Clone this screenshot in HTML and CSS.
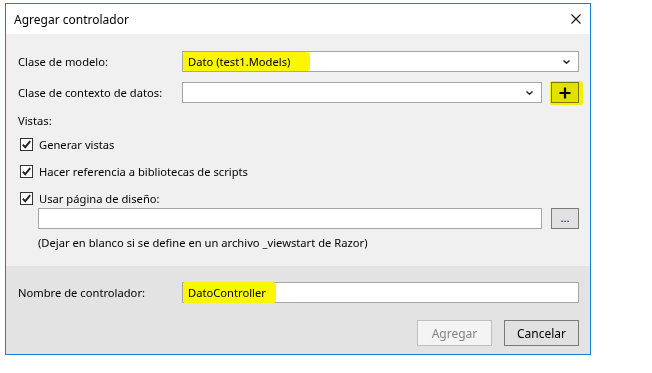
FILE: index.html
```html
<!DOCTYPE html>
<html lang="es">
<head>
<meta charset="utf-8">
<title>Agregar controlador</title>
<link rel="stylesheet" href="styles.css">
</head>
<body>
<div class="dialog">
  <div class="titlebar">
    <span class="title">Agregar controlador</span>
    <svg class="close" width="10" height="10" viewBox="0 0 10 10"><path d="M0.5 0.5L9.5 9.5M9.5 0.5L0.5 9.5" stroke="#111" stroke-width="1.1" fill="none"/></svg>
  </div>
  <div class="main">
    <div class="row row-model">
      <span class="label">Clase de modelo:</span>
      <div class="combo combo-wide">
        <span class="hl">Dato (test1.Models)</span>
        <svg class="chev" width="7" height="4" viewBox="0 0 7 4"><path d="M0.5 0.5L3.5 3.2L6.5 0.5" stroke="#222" stroke-width="1.4" fill="none"/></svg>
      </div>
    </div>
    <div class="row row-context">
      <span class="label">Clase de contexto de datos:</span>
      <div class="combo combo-short">
        <svg class="chev" width="7" height="4" viewBox="0 0 7 4"><path d="M0.5 0.5L3.5 3.2L6.5 0.5" stroke="#222" stroke-width="1.4" fill="none"/></svg>
      </div>
      <div class="btn-small btn-plus">
        <svg width="12" height="12" viewBox="0 0 12 12"><path d="M6 0.5V11.5M0.5 6H11.5" stroke="#000" stroke-width="2.2" fill="none"/></svg>
        <span class="plus-hl"></span>
      </div>
    </div>
    <div class="vistas">Vistas:</div>
    <div class="check check-1">
      <span class="box"><svg width="11" height="11" viewBox="0 0 11 11"><path d="M1.8 5.6L4.2 8.2L9.2 2.2" stroke="#222" stroke-width="1.9" fill="none"/></svg></span>
      <span>Generar vistas</span>
    </div>
    <div class="check check-2">
      <span class="box"><svg width="11" height="11" viewBox="0 0 11 11"><path d="M1.8 5.6L4.2 8.2L9.2 2.2" stroke="#222" stroke-width="1.9" fill="none"/></svg></span>
      <span>Hacer referencia a bibliotecas de scripts</span>
    </div>
    <div class="check check-3">
      <span class="box"><svg width="11" height="11" viewBox="0 0 11 11"><path d="M1.8 5.6L4.2 8.2L9.2 2.2" stroke="#222" stroke-width="1.9" fill="none"/></svg></span>
      <span>Usar página de diseño:</span>
    </div>
    <div class="layout-row">
      <div class="textbox textbox-layout"></div>
      <div class="btn-small btn-dots">...</div>
    </div>
    <div class="note">(Dejar en blanco si se define en un archivo _viewstart de Razor)</div>
  </div>
  <div class="footer">
    <div class="row row-name">
      <span class="label">Nombre de controlador:</span>
      <div class="textbox textbox-name"><span class="hl hl-name">DatoController</span></div>
    </div>
    <div class="buttons">
      <div class="btn btn-disabled">Agregar</div>
      <div class="btn btn-cancel">Cancelar</div>
    </div>
  </div>
</div>
</body>
</html>
```
FILE: styles.css
```css
html, body {
  margin: 0;
  padding: 0;
  background: #ffffff;
}
body {
  padding: 3px 0 0 5px;
  font-family: "Noto Sans", "Open Sans", sans-serif;
  font-size: 11.2px;
  color: #000;
}
.dialog {
  width: 584px;
  height: 350px;
  border: 1px solid #1a7fd6;
  display: flex;
  flex-direction: column;
  background: #f0f0f0;
}
.titlebar {
  height: 30px;
  background: #ffffff;
  display: flex;
  align-items: center;
  justify-content: space-between;
  padding: 0 9px 0 8px;
}
.title {
  font-size: 12px;
}
.close {
  display: block;
}
.main {
  height: 232px;
  background: #f0f0f0;
  padding: 17px 11px 0 12px;
  box-sizing: border-box;
}
.row {
  display: flex;
  align-items: center;
}
.label {
  width: 164px;
  flex: none;
}
.combo {
  height: 21px;
  box-sizing: border-box;
  border: 1px solid #a6a6a6;
  background: #fff;
  display: flex;
  align-items: center;
  justify-content: space-between;
  padding: 0 8px 0 0;
}
.combo-wide {
  width: 397px;
}
.combo-short {
  width: 360px;
  justify-content: flex-end;
}
.row-context {
  margin-top: 10px;
}
.hl {
  background: #fbf700;
  padding: 2px 20px 2px 5px;
  border-radius: 2px 4px 3px 2px;
}
.btn-small {
  width: 28px;
  height: 21px;
  box-sizing: border-box;
  border: 1px solid #7a7a7a;
  background: #e1e1e1;
  margin-left: 9px;
  display: flex;
  align-items: center;
  justify-content: center;
  position: relative;
}
.btn-plus svg {
  position: relative;
}
.plus-hl {
  position: absolute;
  left: -2px;
  top: -2px;
  width: 33px;
  height: 24px;
  background: #ffff00;
  mix-blend-mode: multiply;
  border-radius: 2px 3px 2px 2px;
}
.vistas {
  margin-top: 10px;
  line-height: 16px;
}
.check {
  display: flex;
  align-items: center;
  margin-left: 2px;
  height: 16px;
  gap: 6px;
}
.check-1 { margin-top: 7px; }
.check-2 { margin-top: 11px; }
.check-3 { margin-top: 11px; }
.box {
  width: 13px;
  height: 13px;
  box-sizing: border-box;
  border: 1px solid #333;
  background: #fff;
  display: flex;
  align-items: center;
  justify-content: center;
}
.box svg {
  display: block;
}
.layout-row {
  display: flex;
  margin-top: 2px;
  margin-left: 20px;
}
.textbox {
  height: 21px;
  box-sizing: border-box;
  border: 1px solid #a6a6a6;
  background: #fff;
}
.textbox-layout {
  width: 504px;
}
.btn-dots {
  font-size: 11px;
  line-height: 1;
  padding-bottom: 2px;
}
.note {
  margin-left: 20px;
  margin-top: 6px;
}
.footer {
  flex: 1;
  background: #e3e3e3;
  padding: 16px 11px 0 12px;
}
.textbox-name {
  width: 397px;
  display: flex;
  align-items: center;
  padding-left: 0;
}
.hl-name {
  padding: 3px 10px 3px 5px;
}
.buttons {
  display: flex;
  justify-content: flex-end;
  gap: 12px;
  margin-top: 17px;
}
.btn {
  width: 75px;
  height: 26px;
  box-sizing: border-box;
  display: flex;
  align-items: center;
  justify-content: center;
  font-size: 12px;
}
.btn-disabled {
  background: #f4f4f4;
  border: 1px solid #bfbfbf;
  color: #838383;
}
.btn-cancel {
  background: #e1e1e1;
  border: 1px solid #7a7a7a;
}
```
